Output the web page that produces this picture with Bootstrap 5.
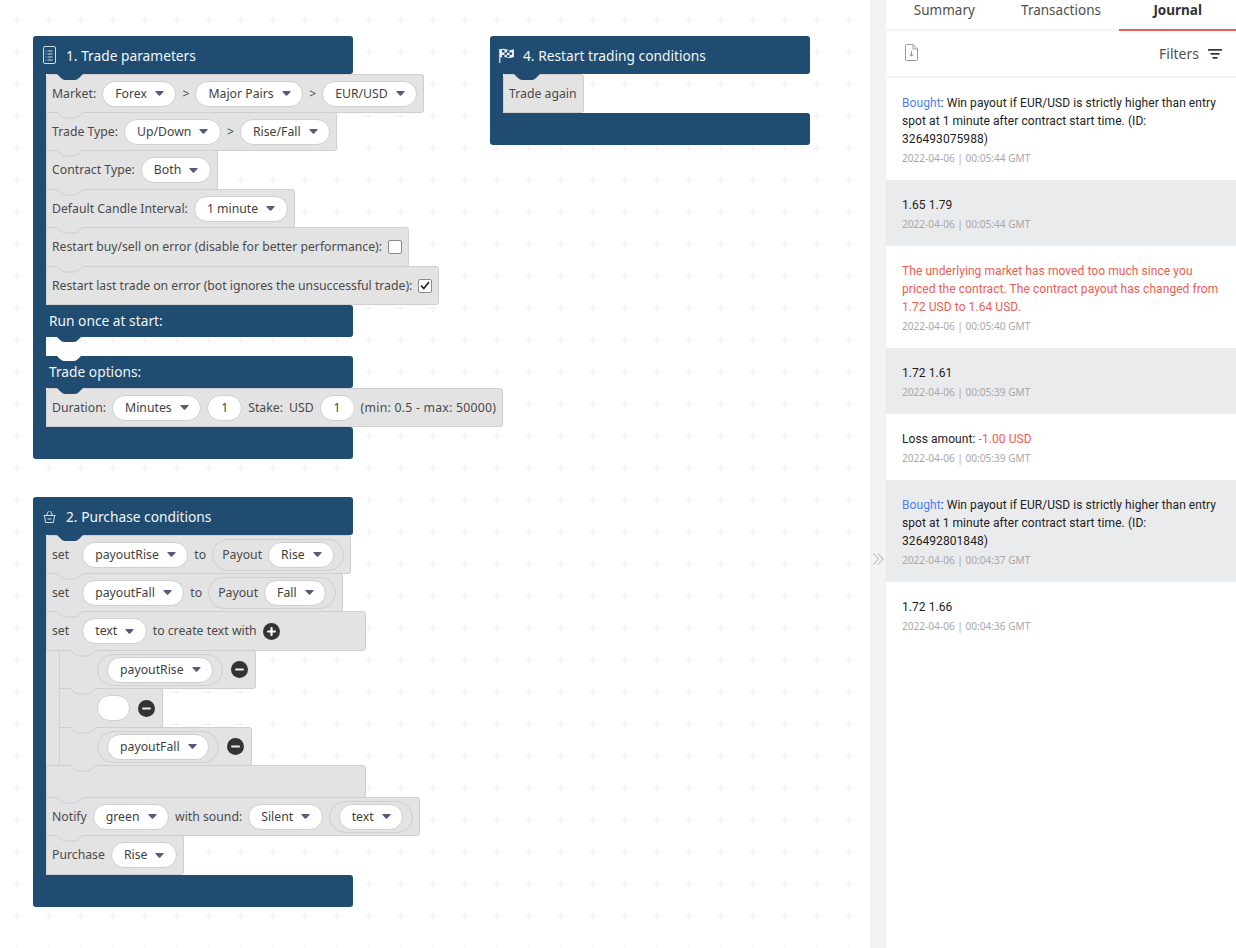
<!DOCTYPE html>
<html lang="en">
<head>
<meta charset="utf-8">
<title>Bot builder</title>
<link href="https://cdn.jsdelivr.net/npm/bootstrap@5.3.0/dist/css/bootstrap.min.css" rel="stylesheet">
<style>
:root{--dk:#1f4c70;--rw:#e3e3e3;--ln:#cfcfcf;}
html,body{height:100%;}
body{font-family:"Noto Sans","Open Sans",sans-serif;font-size:12.25px;color:#4a4a4a;overflow:hidden;background:#fff;}
.shell{height:948px;width:1236px;}
.canvas-area{width:870px;height:948px;overflow:hidden;}
.grid-bg{position:absolute;inset:0;width:100%;height:100%;}
.gutter{width:16px;background:#f2f3f4;padding-top:553px;}
.side{width:350px;background:#fff;}
.blk{position:absolute;width:320px;white-space:nowrap;}
.blk-a{left:33px;top:36px;}
.blk-b{left:33px;top:497px;}
.blk-c{left:490px;top:36px;}
.dk{background:var(--dk);color:#f2f5f8;border-radius:0 3px 3px 0;position:relative;}
.dk-top{border-radius:3px;border-bottom-left-radius:0;height:38px;font-size:13.75px;padding:2px 0 0 10px;}
.dk-top svg{margin:-2px 10px 0 0;}
.dk-top svg.flg{margin-right:8px;margin-left:-1px;}
.dk-mid{height:32px;font-size:13.75px;padding-left:16px;}
.dk-end{height:32px;border-radius:0 3px 3px 3px;}
.bd{border-left:13px solid var(--dk);}
.bd-empty{height:19px;position:relative;}
.rw{background:var(--rw);border:1px solid var(--ln);height:39.5px;width:fit-content;position:relative;padding:1px 6px 0 5px;gap:6px;border-radius:0 3px 3px 0;}
.bd>.rw:first-child{height:38.5px;border-top-left-radius:3px;}
.rw+.rw,.stack+.rw,.rw+.stack,.nest+.rw{margin-top:-1px;}
.nt{position:absolute;left:10px;top:-1px;width:26px;height:7px;overflow:visible;}
.nt-dk{fill:var(--dk);}
.nt-ln{fill:var(--rw);stroke:var(--ln);stroke-width:1;}
.nt-w{fill:#fff;}
.nt-shift{left:23px;}
.fld{background:#fff;border:1px solid #cfcfcf;border-radius:13px;height:26px;padding:0 11.5px 0 12px;gap:8px;color:#3f3f3f;}
.fld svg{width:9px;height:5px;fill:#565a7c;}
.fld-n{padding:0 13px;}
.fld-e{width:33px;}
.sock{border:1px solid #cfcfcf;border-radius:16px;height:32px;padding:0 9px;gap:6px;background:var(--rw);}
.lb-set{margin-right:7px;}
.lb-long{letter-spacing:-.02px;}
.lb-num{letter-spacing:.25px;}
.cb{width:14px;height:14px;background:#fff;border:1px solid #8a8a8a;border-radius:2px;}
.rnd{width:17px;height:17px;}
.stack{position:relative;}
.nest{border-left:13px solid var(--rw);margin-top:-1px;}
.nest .rw{padding-left:37px;gap:8px;padding-right:7px;}
.wide{width:320px;}
.foot{height:32.5px;}
.tabs-bar{height:31px;border-bottom:2px solid #f2f3f4;}
.tabs-bar .nav-link{padding:0;height:31px;line-height:20px;font-size:13.5px;color:#4f4f4f;border-bottom:2px solid transparent;}
.tabs-bar .nav-link.active{color:#333;font-weight:700;border-bottom-color:#ec5d53;}
.tool{height:47px;border-bottom:2px solid #f2f3f4;padding:0 14px 0 19px;font-size:14px;color:#4f4f4f;}
.tool .dl{margin-top:-3px;}
.tool .flt{gap:9px;}
.jr{padding:16px 16px 14px;border:0;border-radius:0;font-family:Roboto,"Noto Sans",sans-serif;font-size:12px;line-height:18px;letter-spacing:.07px;color:#222;background:#fff;}
.jr.alt{background:#eaebed;}
.jr-d{font-family:"Noto Sans",sans-serif;font-size:10.1px;line-height:16px;margin-top:2px;letter-spacing:0;color:#a8a8a8;}
.t-blue{color:#4f80ee;}
.t-red{color:#ec5d53;}
</style>
</head>
<body>
<svg width="0" height="0" class="position-absolute">
<defs>
<symbol id="tab" viewBox="0 0 26 7" overflow="visible"><path d="M0 0 L4 4 Q6 6 8 6 H18 Q20 6 22 4 L26 0"/></symbol>
<symbol id="car" viewBox="0 0 9 5"><path d="M1 0 H8 Q9.2 0 8.4 1 L5.2 4.5 Q4.5 5.1 3.8 4.5 L.6 1 Q-.2 0 1 0Z"/></symbol>
<symbol id="mn" viewBox="0 0 17 17"><circle cx="8.5" cy="8.5" r="8.5" fill="#333"/><rect x="4" y="7.4" width="9" height="2.2" rx="1" fill="#eee"/></symbol>
<symbol id="pl" viewBox="0 0 17 17"><circle cx="8.5" cy="8.5" r="8.5" fill="#333"/><rect x="4" y="7.4" width="9" height="2.2" rx="1" fill="#fff"/><rect x="7.4" y="4" width="2.2" height="9" rx="1" fill="#fff"/></symbol>
</defs>
</svg>
<div class="shell d-flex">
  <div class="canvas-area position-relative">
    <svg class="grid-bg"><defs><pattern id="cross" x="13" y="16" width="32" height="32" patternUnits="userSpaceOnUse"><path d="M0 4.5H8M4 .5V8.5" stroke="#f1f1f1" stroke-width="1" fill="none"/></pattern></defs><rect width="100%" height="100%" fill="url(#cross)"/></svg>

    <div class="blk blk-a">
      <div class="dk dk-top d-flex align-items-center">
        <svg width="13" height="18" viewBox="0 0 13 18" fill="none" stroke="#cfdbe5" stroke-width="1"><rect x=".5" y=".5" width="12" height="17" rx="1.5"/><path d="M4.500 5H9.500M4.500 8H9.500M4.500 11H9.500M4.500 14H9.500"/><path d="M2.400 5h.9M2.400 8h.9M2.400 11h.9M2.400 14h.9"/></svg>
        1. Trade parameters
      </div>
      <div class="bd">
        <div class="rw d-flex align-items-center"><svg class="nt nt-dk"><use href="#tab"/></svg>Market: <span class="fld d-inline-flex align-items-center">Forex<svg><use href="#car"/></svg></span>&gt;<span class="fld d-inline-flex align-items-center">Major Pairs<svg><use href="#car"/></svg></span>&gt;<span class="fld d-inline-flex align-items-center">EUR/USD<svg><use href="#car"/></svg></span></div>
        <div class="rw d-flex align-items-center"><svg class="nt nt-ln"><use href="#tab"/></svg>Trade Type: <span class="fld d-inline-flex align-items-center">Up/Down<svg><use href="#car"/></svg></span>&gt;<span class="fld d-inline-flex align-items-center">Rise/Fall<svg><use href="#car"/></svg></span></div>
        <div class="rw d-flex align-items-center"><svg class="nt nt-ln"><use href="#tab"/></svg>Contract Type: <span class="fld d-inline-flex align-items-center">Both<svg><use href="#car"/></svg></span></div>
        <div class="rw d-flex align-items-center"><svg class="nt nt-ln"><use href="#tab"/></svg>Default Candle Interval: <span class="fld d-inline-flex align-items-center">1 minute<svg><use href="#car"/></svg></span></div>
        <div class="rw lb-long d-flex align-items-center"><svg class="nt nt-ln"><use href="#tab"/></svg>Restart buy/sell on error (disable for better performance): <span class="cb d-inline-block"></span></div>
        <div class="rw lb-long d-flex align-items-center"><svg class="nt nt-ln"><use href="#tab"/></svg>Restart last trade on error (bot ignores the unsuccessful trade): <span class="cb d-inline-flex align-items-center justify-content-center"><svg width="10" height="9" viewBox="0 0 10 9" fill="none" stroke="#222" stroke-width="1.6"><path d="M1 4.5L3.8 7.5L9 1"/></svg></span></div>
      </div>
      <div class="dk dk-mid d-flex align-items-center">Run once at start:</div>
      <div class="bd"><div class="bd-empty"><svg class="nt nt-dk"><use href="#tab"/></svg></div></div>
      <div class="dk dk-mid d-flex align-items-center"><svg class="nt nt-w nt-shift"><use href="#tab"/></svg>Trade options:</div>
      <div class="bd">
        <div class="rw d-flex align-items-center"><svg class="nt nt-dk"><use href="#tab"/></svg>Duration: <span class="fld d-inline-flex align-items-center">Minutes<svg><use href="#car"/></svg></span><span class="fld fld-n d-inline-flex align-items-center">1</span>Stake: <span>USD</span><span class="fld fld-n d-inline-flex align-items-center">1</span><span class="lb-num">(min: 0.5 - max: 50000)</span></div>
      </div>
      <div class="dk dk-end"></div>
    </div>

    <div class="blk blk-b">
      <div class="dk dk-top d-flex align-items-center">
        <svg width="13" height="13" viewBox="0 0 13 13" fill="none" stroke="#cfdbe5" stroke-width="1"><path d="M.5 5.5H12.500M1.500 5.500L2.500 12.500H10.500L11.500 5.500M3.500 5.500L5.500 1M9.500 5.500L7.500 1M4.500 9H8.500"/></svg>
        2. Purchase conditions
      </div>
      <div class="bd">
        <div class="rw d-flex align-items-center"><svg class="nt nt-dk"><use href="#tab"/></svg><span class="lb-set">set</span><span class="fld d-inline-flex align-items-center">payoutRise<svg><use href="#car"/></svg></span>to<span class="sock d-inline-flex align-items-center">Payout<span class="fld d-inline-flex align-items-center">Rise<svg><use href="#car"/></svg></span></span></div>
        <div class="rw d-flex align-items-center"><svg class="nt nt-ln"><use href="#tab"/></svg><span class="lb-set">set</span><span class="fld d-inline-flex align-items-center">payoutFall<svg><use href="#car"/></svg></span>to<span class="sock d-inline-flex align-items-center">Payout<span class="fld d-inline-flex align-items-center">Fall<svg><use href="#car"/></svg></span></span></div>
        <div class="stack">
          <div class="rw wide d-flex align-items-center"><svg class="nt nt-ln"><use href="#tab"/></svg><span class="lb-set">set</span><span class="fld d-inline-flex align-items-center">text<svg><use href="#car"/></svg></span>to create text with<svg class="rnd"><use href="#pl"/></svg></div>
          <div class="nest">
            <div class="rw d-flex align-items-center"><svg class="nt nt-ln"><use href="#tab"/></svg><span class="sock d-inline-flex align-items-center"><span class="fld d-inline-flex align-items-center">payoutRise<svg><use href="#car"/></svg></span></span><svg class="rnd"><use href="#mn"/></svg></div>
            <div class="rw d-flex align-items-center"><svg class="nt nt-ln"><use href="#tab"/></svg><span class="fld fld-e d-inline-block"></span><svg class="rnd"><use href="#mn"/></svg></div>
            <div class="rw d-flex align-items-center"><svg class="nt nt-ln"><use href="#tab"/></svg><span class="sock d-inline-flex align-items-center"><span class="fld d-inline-flex align-items-center">payoutFall<svg><use href="#car"/></svg></span></span><svg class="rnd"><use href="#mn"/></svg></div>
          </div>
          <div class="rw wide foot"><svg class="nt nt-ln nt-shift"><use href="#tab"/></svg></div>
        </div>
        <div class="rw d-flex align-items-center"><svg class="nt nt-ln"><use href="#tab"/></svg>Notify<span class="fld d-inline-flex align-items-center">green<svg><use href="#car"/></svg></span>with sound:<span class="fld d-inline-flex align-items-center">Silent<svg><use href="#car"/></svg></span><span class="sock d-inline-flex align-items-center"><span class="fld d-inline-flex align-items-center">text<svg><use href="#car"/></svg></span></span></div>
        <div class="rw d-flex align-items-center"><svg class="nt nt-ln"><use href="#tab"/></svg>Purchase<span class="fld d-inline-flex align-items-center">Rise<svg><use href="#car"/></svg></span></div>
      </div>
      <div class="dk dk-end"></div>
    </div>

    <div class="blk blk-c">
      <div class="dk dk-top d-flex align-items-center">
        <svg class="flg" width="16" height="15" viewBox="0 0 16 15"><path d="M1 1.500 Q4 0 8 1.500 T15 1 L15 9 Q11 10.500 8 9.500 T1 9.500Z" fill="#e9eef3"/><path d="M.8 1V15" stroke="#e9eef3" stroke-width="1.200"/><g fill="#1f4c70"><rect x="3" y="2" width="2.500" height="2.400"/><rect x="8" y="2.400" width="2.500" height="2.400"/><rect x="5.500" y="4.500" width="2.500" height="2.400"/><rect x="10.500" y="4.500" width="2.500" height="2.400"/><rect x="3" y="7" width="2.500" height="2"/><rect x="8" y="7" width="2.500" height="2"/></g></svg>
        4. Restart trading conditions
      </div>
      <div class="bd"><div class="rw d-flex align-items-center"><svg class="nt nt-dk"><use href="#tab"/></svg>Trade again</div></div>
      <div class="dk dk-end"></div>
    </div>
  </div>

  <div class="gutter d-flex align-items-start justify-content-center">
    <svg width="11" height="12" viewBox="0 0 11 12" fill="none" stroke="#a9adb3" stroke-width="1"><path d="M.5 .5L5.500 6L.5 11.500M5 .5L10 6L5 11.500"/></svg>
  </div>

  <div class="side">
    <ul class="nav nav-justified tabs-bar">
      <li class="nav-item"><a class="nav-link" href="#">Summary</a></li>
      <li class="nav-item"><a class="nav-link" href="#">Transactions</a></li>
      <li class="nav-item"><a class="nav-link active" href="#">Journal</a></li>
    </ul>
    <div class="tool d-flex align-items-center justify-content-between">
      <svg class="dl" width="13" height="17" viewBox="0 0 13 17" fill="none" stroke="#9a9a9a" stroke-width="1"><path d="M.5 1.500Q.5 .5 1.500 .5H8L12.500 5V15.500Q12.500 16.500 11.500 16.500H1.500Q.5 16.500 .5 15.500ZM8 .5V5H12.500M6.500 7V12M4.300 10L6.500 12.300L8.700 10"/></svg>
      <div class="flt d-flex align-items-center">Filters
        <svg width="14" height="10" viewBox="0 0 14 10" fill="#333"><rect width="14" height="1.700"/><rect x="2.500" y="4" width="9" height="1.700"/><rect x="4.500" y="8" width="5" height="1.700"/></svg>
      </div>
    </div>
    <div class="list-group list-group-flush">
      <div class="list-group-item jr"><span class="t-blue">Bought</span>: Win payout if EUR/USD is strictly higher than entry spot at 1 minute after contract start time. (ID: 326493075988)<div class="jr-d">2022-04-06 | 00:05:44 GMT</div></div>
      <div class="list-group-item jr alt">1.65 1.79<div class="jr-d">2022-04-06 | 00:05:44 GMT</div></div>
      <div class="list-group-item jr"><span class="t-red">The underlying market has moved too much since you priced the contract. The contract payout has changed from 1.72 USD to 1.64 USD.</span><div class="jr-d">2022-04-06 | 00:05:40 GMT</div></div>
      <div class="list-group-item jr alt">1.72 1.61<div class="jr-d">2022-04-06 | 00:05:39 GMT</div></div>
      <div class="list-group-item jr">Loss amount: <span class="t-red">-1.00 USD</span><div class="jr-d">2022-04-06 | 00:05:39 GMT</div></div>
      <div class="list-group-item jr alt"><span class="t-blue">Bought</span>: Win payout if EUR/USD is strictly higher than entry spot at 1 minute after contract start time. (ID: 326492801848)<div class="jr-d">2022-04-06 | 00:04:37 GMT</div></div>
      <div class="list-group-item jr">1.72 1.66<div class="jr-d">2022-04-06 | 00:04:36 GMT</div></div>
    </div>
  </div>
</div>
</body>
</html>
